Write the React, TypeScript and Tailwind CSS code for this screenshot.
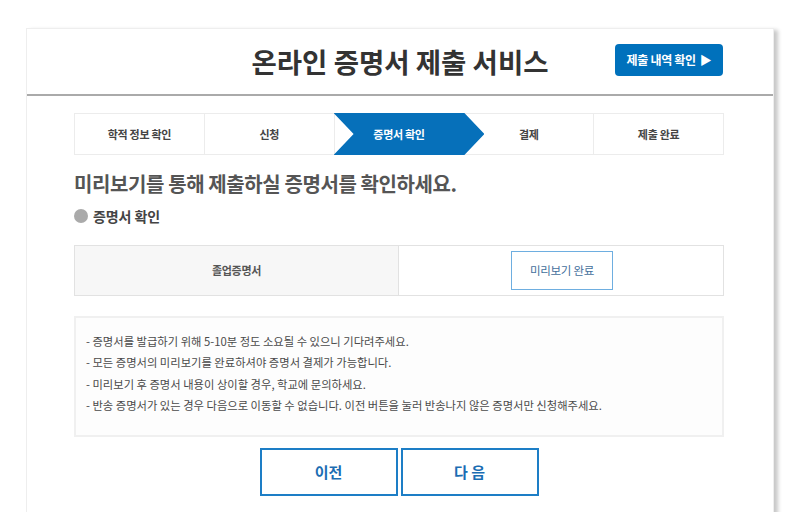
const steps = ["학적 정보 확인", "신청", "증명서 확인", "결제", "제출 완료"];
const activeStep = 2;

const notices = [
  "- 증명서를 발급하기 위해 5-10분 정도 소요될 수 있으니 기다려주세요.",
  "- 모든 증명서의 미리보기를 완료하셔야 증명서 결제가 가능합니다.",
  "- 미리보기 후 증명서 내용이 상이할 경우, 학교에 문의하세요.",
  "- 반송 증명서가 있는 경우 다음으로 이동할 수 없습니다. 이전 버튼을 눌러 반송나지 않은 증명서만 신청해주세요.",
];

/* ── 단계 표시 ───────────────────────────────── */
function StepBar() {
  return (
    <div className="flex h-[42px] w-[650px] border border-[#ececec]">
      {steps.map((label, i) => {
        const active = i === activeStep;
        return (
          <div
            key={label}
            className={`relative flex flex-1 items-center justify-center ${
              i > 0 ? "border-l border-[#ececec]" : ""
            } ${active ? "z-10" : ""}`}
          >
            {active && (
              <div className="absolute inset-y-[-1px] left-[-1px] right-[-21px] bg-[#0670ba] [clip-path:polygon(0_0,calc(100%-20px)_0,100%_50%,calc(100%-20px)_100%,0_100%,20px_50%)]" />
            )}
            <span
              className={`relative text-[11px] font-bold tracking-[-0.3px] ${
                active ? "text-white" : "text-[#444]"
              }`}
            >
              {label}
            </span>
          </div>
        );
      })}
    </div>
  );
}

export default function App() {
  return (
    <div className="min-h-screen bg-white pl-[26px] pt-[28px] font-['Noto_Sans_CJK_KR','Noto_Sans',sans-serif]">
      <div className="w-[748px] border border-b-0 border-[#eeeeee] bg-white pb-10 shadow-[4px_2px_4px_rgba(0,0,0,0.22)]">
        {/* 헤더 */}
        <header className="relative flex h-[67px] items-center justify-center border-b-2 border-[#aaaaaa]">
          <h1 className="text-[27.5px] font-bold leading-none text-[#333]">
            온라인 증명서 제출 서비스
          </h1>
          <button
            type="button"
            className="absolute right-[50px] top-[15px] flex h-[32px] w-[108px] items-center justify-center gap-1 rounded-[4px] bg-[#0071bc] text-[12px] font-bold tracking-[-0.3px] text-white"
          >
            제출 내역 확인
            <span className="text-[12px] leading-none">▶</span>
          </button>
        </header>

        <div className="flex flex-col pl-[47px] pt-[17px]">
          <StepBar />

          <h2 className="mt-[16px] text-[20px] font-bold leading-[26px] tracking-[-0.4px] text-[#555]">
            미리보기를 통해 제출하실 증명서를 확인하세요.
          </h2>

          <div className="mt-[9px] flex items-center gap-[5px]">
            <span className="h-[14px] w-[14px] rounded-full bg-[#aaaaaa]" />
            <span className="text-[14px] font-bold leading-[20px] tracking-[-0.1px] text-[#444]">
              증명서 확인
            </span>
          </div>

          {/* 증명서 목록 */}
          <div className="mt-[19px] flex h-[51px] w-[650px] border border-[#e2e2e2]">
            <div className="flex w-[324px] items-center justify-center border-r border-[#e2e2e2] bg-[#f7f7f7] text-[11px] font-bold tracking-[-0.3px] text-[#555]">
              졸업증명서
            </div>
            <div className="flex flex-1 items-center justify-center pl-[2px]">
              <button
                type="button"
                className="h-[39px] w-[102px] border border-[#6eaee0] bg-white text-[11.5px] tracking-[-0.3px] text-[#44709c]"
              >
                미리보기 완료
              </button>
            </div>
          </div>

          {/* 안내 */}
          <div className="mt-[20px] w-[650px] border-2 border-[#f0f0f0] bg-[#fdfdfd] pb-[19px] pl-[10px] pt-[13px]">
            {notices.map((t) => (
              <p key={t} className="text-[11.3px] leading-[21.3px] text-[#4a4a4a]">
                {t}
              </p>
            ))}
          </div>

          <div className="mt-[11px] flex w-[650px] justify-center gap-[3px]">
            <button
              type="button"
              className="h-[48px] w-[138px] border-2 border-[#1d7ec6] bg-white text-[15px] font-bold text-[#1b6db3]"
            >
              이전
            </button>
            <button
              type="button"
              className="h-[48px] w-[138px] border-2 border-[#1d7ec6] bg-white text-[15px] font-bold text-[#1b6db3]"
            >
              다 음
            </button>
          </div>
        </div>
      </div>
    </div>
  );
}
